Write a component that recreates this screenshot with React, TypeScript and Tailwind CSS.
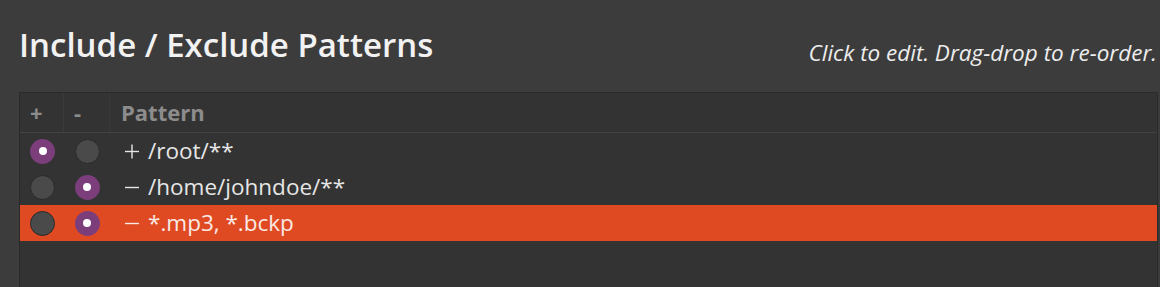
import React from "react";

type Rule = { include: boolean; pattern: string; selected?: boolean };

const rules: Rule[] = [
  { include: true, pattern: "/root/**" },
  { include: false, pattern: "/home/johndoe/**" },
  { include: false, pattern: "*.mp3, *.bckp", selected: true },
];

function Radio({ on }: { on: boolean }) {
  if (on) {
    return (
      <span className="flex h-[25px] w-[25px] items-center justify-center rounded-full bg-[#7b3e7b]">
        <span className="h-[8px] w-[8px] rounded-full bg-white" />
      </span>
    );
  }
  return <span className="h-[25px] w-[25px] rounded-full border border-[#2a2a2a] bg-[#4a4a4a]" />;
}

// thin plus / minus marks in front of each pattern
function Sign({ plus }: { plus: boolean }) {
  return (
    <svg width="23" height="16" viewBox="0 0 23 16" className="shrink-0">
      <path d="M0 8.5h14" stroke="currentColor" strokeWidth="1.4" />
      {plus && <path d="M7 1.5v14" stroke="currentColor" strokeWidth="1.4" />}
    </svg>
  );
}

export default function App() {
  return (
    <div
      className="h-[287px] w-[1160px] overflow-hidden bg-[#3c3c3c]"
      style={{ fontFamily: '"Open Sans", "Noto Sans", sans-serif' }}
    >
      <div className="flex items-end justify-between pl-[19px] pr-[3px] pt-[24px]">
        <h1 className="text-[33px] font-semibold leading-[41px] text-[#f2f2f2]">Include / Exclude Patterns</h1>
        <p className="mb-[-2px] text-[22.5px] italic leading-[28px] text-[#ededed]">
          Click to edit. Drag-drop to re-order.
        </p>
      </div>

      <div className="ml-[19px] mr-[2px] mt-[27px] h-[220px] border border-[#2a2a2a] bg-[#333333]">
        <div className="grid h-[40px] grid-cols-[44px_46px_1fr] border-b border-[#434343] text-[22px] font-bold text-[#8c8c8c]">
          <div className="flex items-center border-r border-[#3a3a3a] pl-[10px]">+</div>
          <div className="flex items-center border-r border-[#3a3a3a] pl-[10px]">-</div>
          <div className="flex items-center pl-[11px]">Pattern</div>
        </div>
        {rules.map((r) => (
          <div
            key={r.pattern}
            className={
              "grid h-[36px] grid-cols-[44px_46px_1fr] items-center text-[22.5px] " +
              (r.selected ? "bg-[#df4a23] text-[#fbe9e3]" : "text-[#e6e6e6]")
            }
          >
            <div className="flex justify-center pl-[1px]">
              <Radio on={r.include} />
            </div>
            <div className="flex justify-center">
              <Radio on={!r.include} />
            </div>
            <div className="flex items-center pl-[15px]">
              <Sign plus={r.include} />
              <span>{r.pattern}</span>
            </div>
          </div>
        ))}
      </div>
    </div>
  );
}
